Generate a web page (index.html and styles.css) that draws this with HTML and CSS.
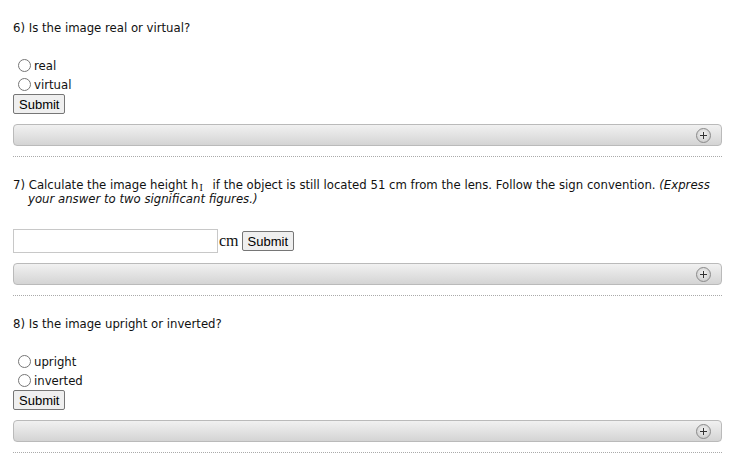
FILE: index.html
```html
<!DOCTYPE html>
<html>
<head>
<meta charset="utf-8">
<link rel="stylesheet" href="styles.css">
</head>
<body>
<div class="page">
  <div class="question">
    <p class="qtext">6) Is the image real or virtual?</p>
    <div class="choices">
      <label class="choice"><input type="radio" name="q6">real</label>
      <label class="choice"><input type="radio" name="q6">virtual</label>
    </div>
    <button class="submit">Submit</button>
    <div class="bar"><span class="plus"></span></div>
    <div class="rule"></div>
  </div>

  <div class="question">
    <p class="qtext">7) Calculate the image height h<sub>I</sub> if the object is still located 51 cm from the lens. Follow the sign convention. <em>(Express your answer to two significant figures.)</em></p>
    <div class="answer">
      <input class="field" type="text"><span class="unit">cm</span><button class="submit">Submit</button>
    </div>
    <div class="bar"><span class="plus"></span></div>
    <div class="rule"></div>
  </div>

  <div class="question">
    <p class="qtext">8) Is the image upright or inverted?</p>
    <div class="choices">
      <label class="choice"><input type="radio" name="q8">upright</label>
      <label class="choice"><input type="radio" name="q8">inverted</label>
    </div>
    <button class="submit">Submit</button>
    <div class="bar"><span class="plus"></span></div>
    <div class="rule"></div>
  </div>
</div>
</body>
</html>
```

FILE: styles.css
```css
body {
  margin: 0;
  background: #fff;
  color: #111;
  font-family: "DejaVu Sans Condensed", "Liberation Sans", sans-serif;
  font-size: 13px;
}
.page {
  padding: 0 31px 0 13px;
}
.question {
  display: flex;
  flex-direction: column;
  align-items: flex-start;
}
.qtext {
  margin: 21px 0 0 0;
  line-height: 14px;
  padding-left: 15px;
  text-indent: -15px;
}
.qtext sub {
  font-family: "Liberation Serif", serif;
  font-size: 10px;
  vertical-align: -2px;
  line-height: 0;
  margin: 0 6px 0 1px;
}
.choices {
  margin-top: 21px;
  display: flex;
  flex-direction: column;
}
.choice {
  display: flex;
  align-items: center;
  height: 19px;
  font-size: 13px;
}
.choice input {
  margin: 0 3px 0 5px;
  width: 13px;
  height: 13px;
}
.submit {
  font-family: "Liberation Sans", Arial, sans-serif;
  font-size: 13px;
  padding: 0 5px;
  height: 20px;
  background: #efefef;
  border: 1px solid #767676;
  border-radius: 2px;
  color: #000;
}
.bar {
  align-self: stretch;
  margin-top: 10px;
  height: 20px;
  border: 1px solid #bababa;
  border-radius: 4px;
  background: linear-gradient(#f1f1f1, #d4d4d4);
  display: flex;
  justify-content: flex-end;
  align-items: center;
  padding-right: 10px;
}
.plus {
  width: 13px;
  height: 13px;
  border-radius: 50%;
  border: 1px solid #8a8a8a;
  background: radial-gradient(circle at 50% 40%, #f4f4f4, #c4c4c4);
  position: relative;
}
.plus::before, .plus::after {
  content: "";
  position: absolute;
  background: #333;
}
.plus::before {
  left: 3px; right: 3px; top: 6px; height: 1px;
}
.plus::after {
  top: 3px; bottom: 3px; left: 6px; width: 1px;
}
.rule {
  align-self: stretch;
  margin-top: 10px;
  border-top: 1px dotted #aaa;
}
.answer {
  margin-top: 23px;
  display: flex;
  align-items: center;
}
.field {
  width: 205px;
  height: 24px;
  box-sizing: border-box;
  border: 1px solid #c8c8c8;
  margin: 0;
}
.unit {
  font-family: "Liberation Serif", serif;
  font-size: 16px;
  margin: 0 3px 0 1px;
}
```
